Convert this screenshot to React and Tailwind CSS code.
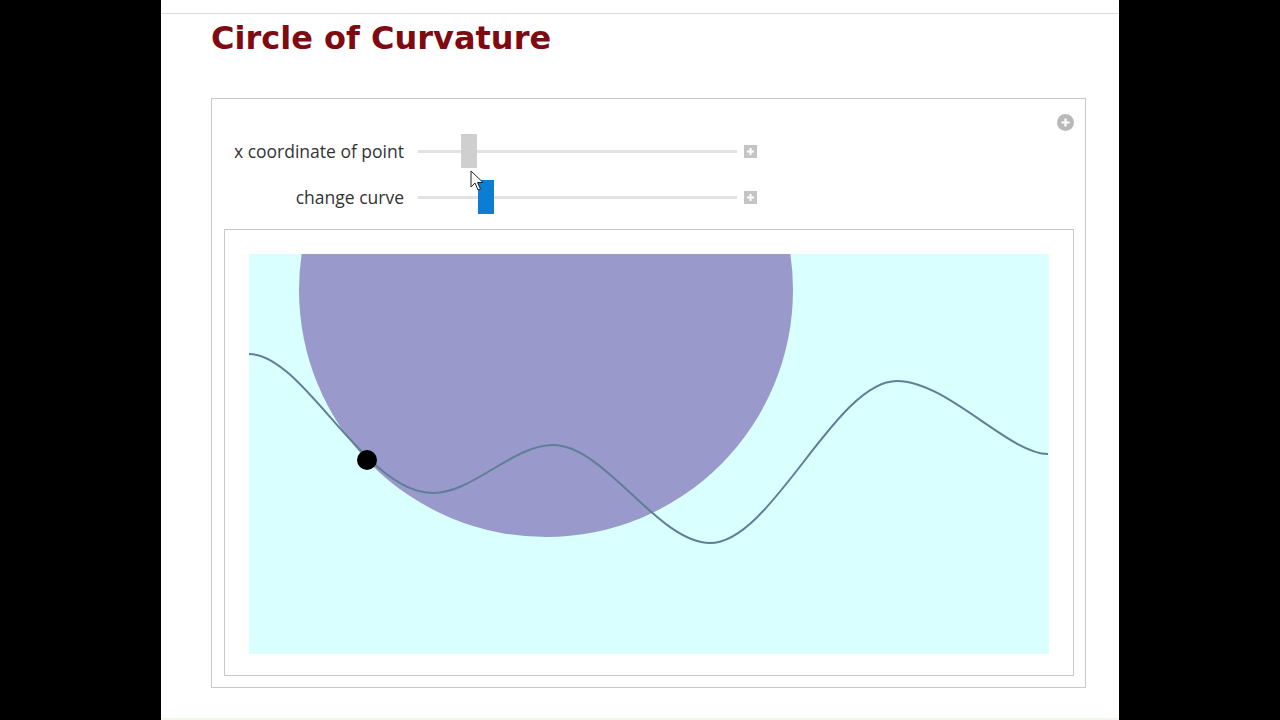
import React from "react";

// piecewise cubic, flat tangents at the peaks and troughs
const curve =
  "M 0 100 C 55 100 115 239 184 239" +
  " C 224 239 264 191 304 191" +
  " C 356 191 409 289 461 289" +
  " C 523 289 586 127 648 127" +
  " C 698 127 760 200 799 200";

const PlusBox = () => (
  <div className="w-[13px] h-[13px] bg-[#c4c4c4] flex items-center justify-center">
    <svg width="9" height="9" viewBox="0 0 9 9">
      <path d="M4.5 1 V8 M1 4.5 H8" stroke="#fff" strokeWidth="2" />
    </svg>
  </div>
);

const SliderRow = ({ label, thumbLeft, thumbClass }) => (
  <div className="flex items-center h-[36px]">
    <div className="w-[180px] text-right text-[17.5px] text-[#333] whitespace-nowrap" style={{ fontFamily: '"Open Sans", sans-serif' }}>
      {label}
    </div>
    <div className="relative ml-[14px] w-[319px] h-[36px] flex items-center">
      <div className="w-full h-[3px] bg-[#e2e2e2]" />
      <div className={`absolute top-[1px] w-[16px] h-[34px] ${thumbClass}`} style={{ left: thumbLeft }} />
    </div>
    <div className="ml-[7px]">
      <PlusBox />
    </div>
  </div>
);

export default function App() {
  return (
    <div className="w-full h-[720px] bg-black flex justify-center overflow-hidden">
      <div className="w-[958px] h-[720px] bg-white flex flex-col">
        <div className="h-[14px] border-b border-[#dcdcdc] shrink-0" />
        <div className="h-[84px] shrink-0 pl-[50px] pt-[5px]">
          <h1
            className="text-[32px] leading-[38px] font-bold text-[#7f0a12]"
            style={{ fontFamily: '"DejaVu Sans", Verdana, sans-serif' }}
          >
            Circle of Curvature
          </h1>
        </div>
        <div className="ml-[50px] w-[875px] h-[590px] border border-[#c8c8c8] relative shrink-0 pl-[12px] pt-[34px]">
          <div className="absolute top-[15px] right-[11px] w-[17px] h-[17px] rounded-full bg-[#b9b9b9] flex items-center justify-center">
            <svg width="11" height="11" viewBox="0 0 11 11">
              <path d="M5.5 1.5 V9.5 M1.5 5.5 H9.5" stroke="#fff" strokeWidth="2.2" />
            </svg>
          </div>
          <div className="flex flex-col gap-[10px]">
            <SliderRow label="x coordinate of point" thumbLeft={43} thumbClass="bg-[#cfcfcf]" />
            <SliderRow label="change curve" thumbLeft={60} thumbClass="bg-[#0b7dd4]" />
          </div>
          <div className="mt-[14px] w-[850px] h-[447px] border border-[#c8c8c8] pl-[24px] pt-[24px]">
            <svg width="800" height="400" viewBox="0 0 800 400" className="block">
              <rect x="0" y="0" width="800" height="400" fill="#d9ffff" />
              <circle cx="297" cy="36" r="247" fill="#9999cc" />
              <path d={curve} fill="none" stroke="#5f7f96" strokeWidth="2" />
              <circle cx="118" cy="206" r="10" fill="#000" />
            </svg>
          </div>
          <svg className="absolute left-[258px] top-[71px]" width="14" height="22" viewBox="0 0 14 22">
            <path d="M1 1 L1 17 L5 13 L8 20 L10.5 19 L7.5 12.5 L13 12.5 Z" fill="#fff" stroke="#222" strokeWidth="1" strokeLinejoin="round" />
          </svg>
        </div>
        <div className="flex-1" />
        <div className="h-[2px] bg-[#eef9ec] shrink-0" />
      </div>
    </div>
  );
}
